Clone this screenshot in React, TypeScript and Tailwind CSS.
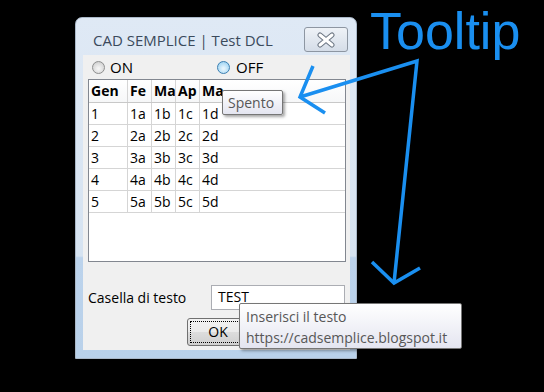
import React from "react";

const font = { fontFamily: '"Open Sans", "Noto Sans", sans-serif' };

function Radio({ active }: { active?: boolean }) {
  return (
    <span
      className={
        "inline-block w-[13px] h-[13px] rounded-full border " +
        (active
          ? "border-[#3c7fb1] bg-[radial-gradient(circle_at_50%_60%,#e6f4fc_10%,#a9d9f5_70%,#7cb7de_100%)]"
          : "border-[#8e8f8f] bg-[radial-gradient(circle_at_50%_60%,#f4f4f4_10%,#d6d6d6_70%,#b9b9b9_100%)]")
      }
    />
  );
}

const rows = [
  ["1", "1a", "1b", "1c", "1d"],
  ["2", "2a", "2b", "2c", "2d"],
  ["3", "3a", "3b", "3c", "3d"],
  ["4", "4a", "4b", "4c", "4d"],
  ["5", "5a", "5b", "5c", "5d"],
];
const heads = ["Gen", "Fe", "Ma", "Ap", "Ma"];
const widths = ["w-[39px]", "w-[24px]", "w-[24px]", "w-[24px]", "flex-1"];

export default function App() {
  return (
    <div className="relative w-[544px] h-[392px] bg-black overflow-hidden" style={font}>
      {/* Window */}
      <div className="absolute left-[75px] top-[17px] w-[282px] h-[342px] rounded-t-[7px] bg-[linear-gradient(to_bottom,#dfe9f5_0%,#d6e3f1_70%,#bcd3ec_70.5%,#b9d1ea_100%)] border border-[#aab8c8] flex flex-col">
        {/* title bar */}
        <div className="h-[37px] flex items-start">
          <div className="ml-[17px] mt-[12px] text-[15px] leading-[20px] text-[#3b4a5c] whitespace-nowrap">
            CAD SEMPLICE | Test DCL
          </div>
          <div className="ml-auto mr-[8px] mt-[9px] w-[44px] h-[25px] rounded-[3px] border border-[#8d96a2] bg-[linear-gradient(to_bottom,#eef2f7,#d5dde8)] flex items-center justify-center">
            <svg width="22" height="16" viewBox="0 0 22 16">
              <path d="M5 3 L17 13 M17 3 L5 13" stroke="#6c7683" strokeWidth="5" strokeLinecap="round" />
              <path d="M5 3 L17 13 M17 3 L5 13" stroke="#ffffff" strokeWidth="3" strokeLinecap="round" />
            </svg>
          </div>
        </div>
        {/* client */}
        <div className="ml-[7px] w-[267px] h-[295px] bg-[#f0f0f0] flex flex-col text-[14px] text-black">
          <div className="h-[24px] flex items-center">
            <div className="ml-[9px] flex items-center gap-[5px] w-[125px]">
              <Radio />
              <span className="leading-[18px] text-[15px]">ON</span>
            </div>
            <div className="flex items-center gap-[6px]">
              <Radio active />
              <span className="leading-[18px] text-[15px]">OFF</span>
            </div>
          </div>
          {/* listview */}
          <div className="ml-[5px] w-[258px] h-[183px] border border-[#828790] bg-white flex flex-col">
            <div className="h-[23px] flex border-b border-[#c8c8c8] font-bold bg-[linear-gradient(to_bottom,#ffffff,#f6f7f8)]">
              {heads.map((h, i) => (
                <div
                  key={i}
                  className={widths[i] + " overflow-hidden whitespace-nowrap pl-[2px] leading-[22px] border-r border-[#d5d5d5]" + (i === 4 ? " border-r-0" : "")}
                >
                  {h}
                </div>
              ))}
            </div>
            {rows.map((r, ri) => (
              <div key={ri} className="h-[22px] flex border-b border-[#d5d5d5]">
                {r.map((c, i) => (
                  <div
                    key={i}
                    className={widths[i] + " overflow-hidden whitespace-nowrap pl-[2px] leading-[21px] border-r border-[#d5d5d5]" + (i === 4 ? " border-r-0" : "")}
                  >
                    {c}
                  </div>
                ))}
              </div>
            ))}
          </div>
          {/* textbox row */}
          <div className="mt-[23px] h-[25px] flex items-center">
            <span className="ml-[5px] w-[123px]">Casella di testo</span>
            <div className="w-[134px] h-[25px] border border-[#abadb3] bg-white pl-[6px] leading-[22px]">TEST</div>
          </div>
          {/* OK */}
          <div className="mt-[8px] ml-[104px] w-[62px] h-[28px] rounded-[3px] border border-[#707070] bg-[linear-gradient(to_bottom,#f2f2f2_0%,#ebebeb_50%,#dddddd_51%,#cfcfcf_100%)] p-[2px]">
            <div className="w-full h-full border border-dotted border-black flex items-center justify-center leading-[18px]">
              OK
            </div>
          </div>
        </div>
      </div>

      {/* Tooltip Spento */}
      <div className="absolute left-[222px] top-[90px] w-[61px] h-[25px] border border-[#767676] rounded-[2px] bg-[linear-gradient(to_bottom,#ffffff,#e4e5f0)] shadow-[2px_2px_3px_rgba(0,0,0,0.35)] text-[14px] text-[#575757] flex items-center pl-[5px] leading-[18px]">
        Spento
      </div>

      {/* Tooltip 2 */}
      <div className="absolute left-[239px] top-[303px] w-[223px] h-[46px] border border-[#767676] rounded-[2px] bg-[linear-gradient(to_bottom,#ffffff,#e4e5f0)] shadow-[2px_2px_3px_rgba(0,0,0,0.35)] text-[14px] text-[#575757] pl-[6px] pt-[2px] leading-[21px] whitespace-nowrap">
        <div>Inserisci il testo</div>
        <div>https://cadsemplice.blogspot.it</div>
      </div>

      {/* annotation label */}
      <div
        className="absolute left-[370px] top-[1px] text-[52px] leading-[60px] text-[#1a8ff0]"
        style={{ fontFamily: '"Liberation Sans", Arial, sans-serif' }}
      >
        Tooltip
      </div>

      {/* arrows */}
      <svg className="absolute left-0 top-0" width="544" height="392" viewBox="0 0 544 392">
        <g stroke="#1a8ff0" strokeWidth="3.5" fill="none" strokeLinecap="butt" strokeLinejoin="miter">
          <path d="M300 97 L417 61 L394 283" />
          <path d="M313 66 L300 97 L325 113" />
          <path d="M372 262 L394 283 L420 268" />
        </g>
      </svg>
    </div>
  );
}
